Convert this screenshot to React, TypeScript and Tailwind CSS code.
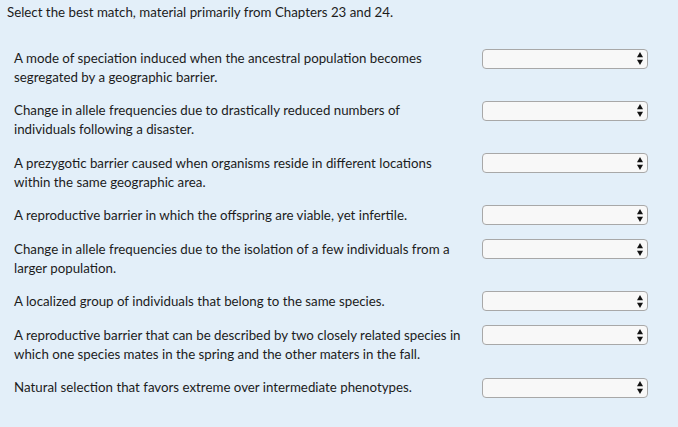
import React from "react";

const rows: string[][] = [
  ["A mode of speciation induced when the ancestral population becomes", "segregated by a geographic barrier."],
  ["Change in allele frequencies due to drastically reduced numbers of", "individuals following a disaster."],
  ["A prezygotic barrier caused when organisms reside in different locations", "within the same geographic area."],
  ["A reproductive barrier in which the offspring are viable, yet infertile."],
  ["Change in allele frequencies due to the isolation of a few individuals from a", "larger population."],
  ["A localized group of individuals that belong to the same species."],
  ["A reproductive barrier that can be described by two closely related species in", "which one species mates in the spring and the other maters in the fall."],
  ["Natural selection that favors extreme over intermediate phenotypes."],
];

function Arrows() {
  return (
    <svg width="6" height="13" viewBox="0 0 6 13" className="block">
      <path d="M3 0 L6 5.3 L0 5.3 Z" fill="#111" />
      <path d="M3 13 L6 7.7 L0 7.7 Z" fill="#111" />
    </svg>
  );
}

function FakeSelect() {
  return (
    <div className="w-[166px] h-[20px] mt-[-0.5px] rounded-[4px] border border-[#a8a8a8] bg-[#f8f8f8] flex items-center justify-end pr-[4px] shrink-0">
      <Arrows />
    </div>
  );
}

export default function App() {
  return (
    <div
      className="w-[678px] h-[427px] bg-[#e3eff9] text-[#1c1c1c] text-[13.3px] leading-[19px] overflow-hidden"
      style={{ fontFamily: "Lato, 'Open Sans', sans-serif" }}
    >
      <p className="pl-[7px] pt-[3px]">Select the best match, material primarily from Chapters 23 and 24.</p>
      <div className="flex flex-col gap-[14.3px] pl-[14px] pt-[27px]">
        {rows.map((r, i) => (
          <div key={i} className="flex items-start">
            <div className="w-[468.3px] shrink-0">
              {r.map((l, j) => (
                <div key={j} className="whitespace-nowrap">{l}</div>
              ))}
            </div>
            <FakeSelect />
          </div>
        ))}
      </div>
    </div>
  );
}
